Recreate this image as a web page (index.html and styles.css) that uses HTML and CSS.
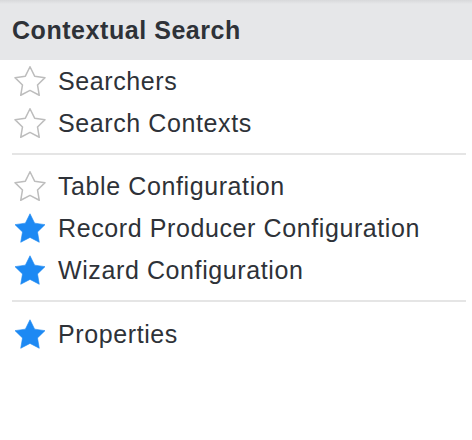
FILE: index.html
```html
<!DOCTYPE html>
<html>
<head>
<meta charset="utf-8">
<link rel="stylesheet" href="styles.css">
</head>
<body>
<div class="panel">
  <div class="header">Contextual Search</div>
  <ul class="group">
    <li class="item"><svg class="star" viewBox="1.5 1.5 21 20"><polygon class="off" points="12,2 15.09,8.26 22,9.27 17,14.14 18.18,21.02 12,17.77 5.82,21.02 7,14.14 2,9.27 8.91,8.26"/></svg><span>Searchers</span></li>
    <li class="item"><svg class="star" viewBox="1.5 1.5 21 20"><polygon class="off" points="12,2 15.09,8.26 22,9.27 17,14.14 18.18,21.02 12,17.77 5.82,21.02 7,14.14 2,9.27 8.91,8.26"/></svg><span>Search Contexts</span></li>
  </ul>
  <div class="divider"></div>
  <ul class="group">
    <li class="item"><svg class="star" viewBox="1.5 1.5 21 20"><polygon class="off" points="12,2 15.09,8.26 22,9.27 17,14.14 18.18,21.02 12,17.77 5.82,21.02 7,14.14 2,9.27 8.91,8.26"/></svg><span>Table Configuration</span></li>
    <li class="item"><svg class="star" viewBox="1.5 1.5 21 20"><polygon class="on" points="12,2 15.09,8.26 22,9.27 17,14.14 18.18,21.02 12,17.77 5.82,21.02 7,14.14 2,9.27 8.91,8.26"/></svg><span>Record Producer Configuration</span></li>
    <li class="item"><svg class="star" viewBox="1.5 1.5 21 20"><polygon class="on" points="12,2 15.09,8.26 22,9.27 17,14.14 18.18,21.02 12,17.77 5.82,21.02 7,14.14 2,9.27 8.91,8.26"/></svg><span>Wizard Configuration</span></li>
  </ul>
  <div class="divider last"></div>
  <ul class="group">
    <li class="item"><svg class="star" viewBox="1.5 1.5 21 20"><polygon class="on" points="12,2 15.09,8.26 22,9.27 17,14.14 18.18,21.02 12,17.77 5.82,21.02 7,14.14 2,9.27 8.91,8.26"/></svg><span>Properties</span></li>
  </ul>
</div>
</body>
</html>
```
FILE: styles.css
```css
html, body {
  margin: 0;
  padding: 0;
  background: #ffffff;
}
body {
  width: 472px;
  height: 440px;
  overflow: hidden;
  font-family: "Liberation Sans", Arial, sans-serif;
  color: #2e3238;
}
.header {
  height: 60px;
  box-sizing: border-box;
  padding-left: 12px;
  line-height: 60px;
  font-size: 25px;
  font-weight: bold;
  letter-spacing: 0.55px;
  background: linear-gradient(to bottom, #d8d9db 0px, #e6e7e9 4px, #e6e7e9 100%);
}
.group {
  list-style: none;
  margin: 0;
  padding: 0;
}
.item {
  display: flex;
  align-items: center;
  height: 42px;
  padding-left: 14px;
  font-size: 25px;
  letter-spacing: 0.6px;
}
.star {
  width: 32px;
  height: 30px;
  flex: none;
  margin-right: 12px;
}
.off {
  fill: none;
  stroke: #bdbdbd;
  stroke-width: 1;
  stroke-linejoin: round;
}
.on {
  fill: #1d89f3;
  stroke: #1d89f3;
  stroke-width: 0.4;
  stroke-linejoin: round;
}
.divider {
  height: 2px;
  margin: 9px 6px 10px 12px;
  background: #e5e5e5;
}
.divider.last {
  margin-bottom: 11px;
}
```
